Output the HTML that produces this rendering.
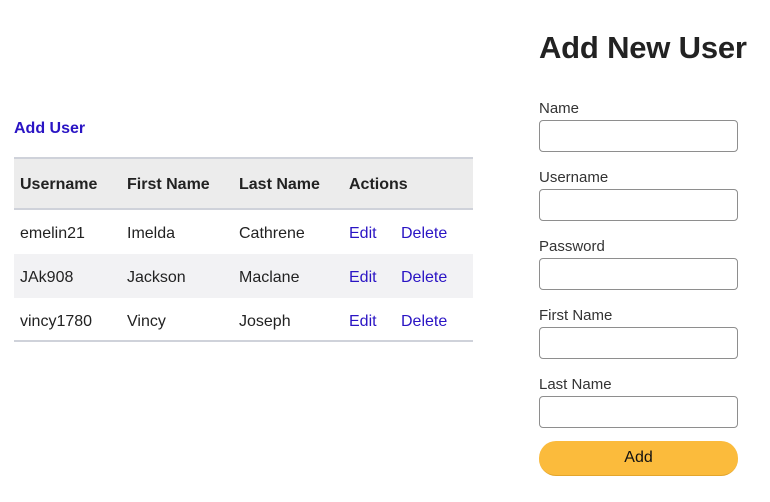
<!DOCTYPE html>
<html><head><style>
body{margin:0;width:770px;height:502px;background:#fff;font-family:"Liberation Sans",sans-serif;position:relative;overflow:hidden;color:#222}
.a{position:absolute;white-space:nowrap}
.addu{left:14px;top:120px;font-size:16px;font-weight:bold;color:#2a14c4}
.tbl{position:absolute;left:14px;top:157px;width:459px}
.row{position:relative;height:43px;font-size:16px}
.row span{position:absolute;top:15px}
.hd{height:49px;background:#ececec;border-top:2px solid #cfd2da;border-bottom:2px solid #cfd2da;font-weight:bold;font-size:16px}
.hd span{top:17px}
.alt{background:#f2f2f4}
.last{border-bottom:2px solid #cfd2da}
.lnk{color:#2a14c4}
h1{position:absolute;left:539px;top:30px;margin:0;font-size:31px;font-weight:bold;color:#222;letter-spacing:-0.2px}
.lbl{position:absolute;left:539px;font-size:15px;color:#333}
.inp{position:absolute;left:539px;width:197px;height:30px;border:1px solid #8e8e8e;border-radius:4px}
.btn{position:absolute;left:539px;top:441px;width:199px;height:34px;border-radius:17px;background:#fbbb3c;border-bottom:1px solid #e3a52c;text-align:center;line-height:34px;font-size:16px;color:#111}
</style></head><body>
<div class="a addu">Add User</div>
<div class="tbl">
<div class="row hd"><span style="left:6px">Username</span><span style="left:113px">First Name</span><span style="left:225px">Last Name</span><span style="left:335px">Actions</span></div>
<div class="row" style="height:44px"><span style="left:6px">emelin21</span><span style="left:113px">Imelda</span><span style="left:225px">Cathrene</span><span class="lnk" style="left:335px">Edit</span><span class="lnk" style="left:387px">Delete</span></div>
<div class="row alt" style="height:44px"><span style="left:6px">JAk908</span><span style="left:113px">Jackson</span><span style="left:225px">Maclane</span><span class="lnk" style="left:335px">Edit</span><span class="lnk" style="left:387px">Delete</span></div>
<div class="row last" style="height:42px"><span style="left:6px">vincy1780</span><span style="left:113px">Vincy</span><span style="left:225px">Joseph</span><span class="lnk" style="left:335px">Edit</span><span class="lnk" style="left:387px">Delete</span></div>
</div>
<h1>Add New User</h1>
<div class="lbl" style="top:100px">Name</div><div class="inp" style="top:120px"></div>
<div class="lbl" style="top:169px">Username</div><div class="inp" style="top:189px"></div>
<div class="lbl" style="top:238px">Password</div><div class="inp" style="top:258px"></div>
<div class="lbl" style="top:307px">First Name</div><div class="inp" style="top:327px"></div>
<div class="lbl" style="top:376px">Last Name</div><div class="inp" style="top:396px"></div>
<div class="btn">Add</div>
</body></html>
